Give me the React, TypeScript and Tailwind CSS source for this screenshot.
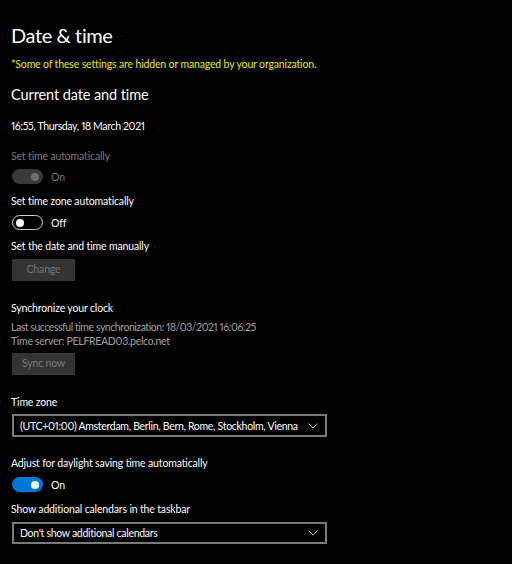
import React from "react"

const font = { fontFamily: 'Lato, "Noto Sans", sans-serif' }

type ToggleState = "disabled" | "off" | "on"

const Toggle = ({ state, label }: { state: ToggleState; label: string }) => {
  return (
    <div className="flex items-center h-[15px] ml-px">
      {state === "disabled" && (
        <div className="w-[31px] h-[15px] rounded-full bg-[#3a3a3a] flex items-center justify-end pr-[4px]">
          <div className="w-[8px] h-[8px] rounded-full bg-[#6e6e6e]"></div>
        </div>
      )}
      {state === "off" && (
        <div className="w-[31px] h-[15px] rounded-full border-[1.5px] border-[#d0d0d0] flex items-center pl-[3px]">
          <div className="w-[8px] h-[8px] rounded-full bg-white"></div>
        </div>
      )}
      {state === "on" && (
        <div className="w-[31px] h-[15px] rounded-full bg-[#0078d7] flex items-center justify-end pr-[4px]">
          <div className="w-[8px] h-[8px] rounded-full bg-white"></div>
        </div>
      )}
      <span
        className={
          "ml-[8px] text-[10.5px] tracking-[-0.15px] leading-[14px] " +
          (state === "disabled" ? "text-[#7a7a7a]" : "text-white")
        }
      >
        {label}
      </span>
    </div>
  )
}

const Label = ({ children, className = "", muted = false }: { children: React.ReactNode; className?: string; muted?: boolean }) => (
  <div
    className={
      "h-[14px] whitespace-nowrap text-[10.5px] tracking-[-0.15px] leading-[14px] " +
      (muted ? "text-[#7a7a7a] " : "text-white ") +
      className
    }
  >
    {children}
  </div>
)

const DisabledButton = ({ children, className = "" }: { children: React.ReactNode; className?: string }) => (
  <div
    className={
      "ml-px w-[63px] h-[22px] bg-[#333333] text-[#7a7a7a] text-[10.5px] tracking-[-0.15px] flex items-center justify-center " +
      className
    }
  >
    {children}
  </div>
)

const Dropdown = ({ value, className = "" }: { value: string; className?: string }) => (
  <div
    className={
      "ml-px w-[315px] border-2 border-[#7a7a7a] flex items-center justify-between pl-[6px] pr-[7px] " +
      className
    }
  >
    <span className="text-white whitespace-nowrap text-[10.5px] tracking-[-0.3px] leading-[14px]">{value}</span>
    <svg width="10" height="6" viewBox="0 0 10 6" fill="none">
      <path d="M0.5 0.5 L5 5 L9.5 0.5" stroke="#bdbdbd" strokeWidth="1" />
    </svg>
  </div>
)

export default function App() {
  return (
    <div className="w-[512px] h-[564px] bg-black overflow-hidden proportional-nums" style={font}>
      <div className="flex flex-col pl-[11px] pt-[21px]">
        <div className="h-[28px] text-[20px] tracking-[-0.4px] leading-[28px] text-white">Date &amp; time</div>
        <Label className="mt-[8px] !text-[#e8e800]">
          *Some of these settings are hidden or managed by your organization.
        </Label>
        <div className="mt-[14px] h-[20px] text-[14.5px] tracking-[-0.1px] leading-[20px] text-white">
          Current date and time
        </div>
        <Label className="mt-[14px] !tracking-[-0.35px]">16:55, Thursday, 18 March 2021</Label>

        <Label muted className="mt-[16px]">Set time automatically</Label>
        <div className="mt-[6px]">
          <Toggle state="disabled" label="On" />
        </div>

        <Label className="mt-[10px]">Set time zone automatically</Label>
        <div className="mt-[7px]">
          <Toggle state="off" label="Off" />
        </div>

        <Label className="mt-[9px]">Set the date and time manually</Label>
        <DisabledButton className="mt-[6px]">Change</DisabledButton>

        <Label className="mt-[20px]">Synchronize your clock</Label>
        <Label muted className="mt-[5px] !text-[#a0a0a0] !tracking-[-0.45px]">
          Last successful time synchronization: 18/03/2021 16:06:25
        </Label>
        <Label muted className="!text-[#a0a0a0] !tracking-[-0.3px]">Time server: PELFREAD03.pelco.net</Label>
        <DisabledButton className="mt-[5px]">Sync now</DisabledButton>

        <Label className="mt-[20px]">Time zone</Label>
        <Dropdown className="mt-[5px] h-[23px]" value="(UTC+01:00) Amsterdam, Berlin, Bern, Rome, Stockholm, Vienna" />

        <Label className="mt-[19px]">Adjust for daylight saving time automatically</Label>
        <div className="mt-[7px]">
          <Toggle state="on" label="On" />
        </div>

        <Label className="mt-[10px]">Show additional calendars in the taskbar</Label>
        <Dropdown className="mt-[6px] h-[22px]" value="Don't show additional calendars" />
      </div>
    </div>
  )
}
